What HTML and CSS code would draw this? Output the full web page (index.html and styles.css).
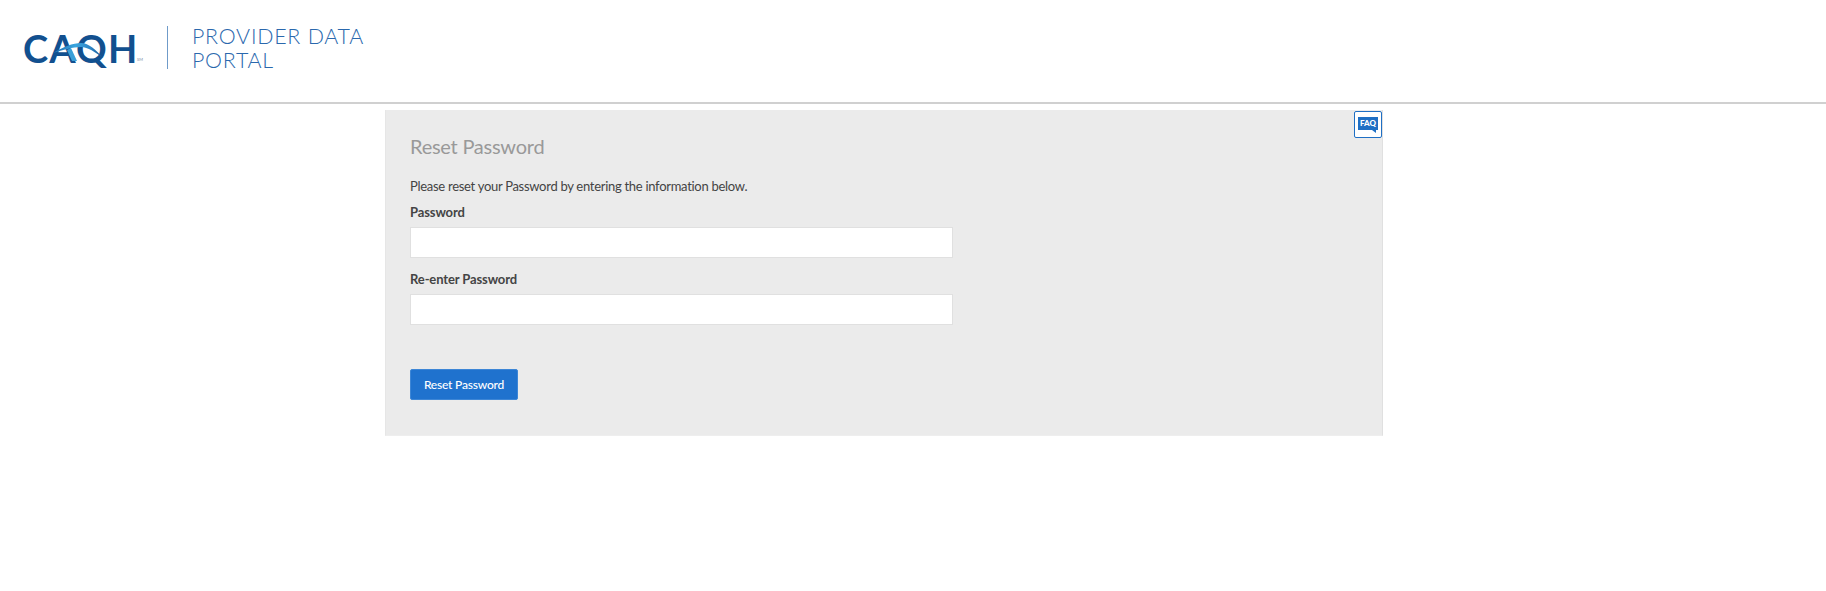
FILE: index.html
```html
<!DOCTYPE html>
<html lang="en">
<head>
  <meta charset="UTF-8">
  <title>Reset Password</title>
  <link rel="stylesheet" href="styles.css">
</head>
<body>
  <header class="site-header">
    <div class="logo">
      <span class="logo-word">CAQH</span>
      <svg class="logo-swoosh" width="144" height="49" viewBox="0 0 144 49">
        <defs>
          <linearGradient id="swoosh" x1="0" y1="0" x2="1" y2="0">
            <stop offset="0" stop-color="#1c6cb0"/>
            <stop offset="0.45" stop-color="#3aa5de"/>
            <stop offset="0.75" stop-color="#2f86c6"/>
            <stop offset="1" stop-color="#12508f"/>
          </linearGradient>
        </defs>
        <path d="M44 25L48 23L54 36H49Z" fill="#3a9fd8"/>
        <path d="M30 28C40 22 50 18 58 18C66 18 73 25 80 33C72 27 65 22 58 22C50 22 40 25 30 28Z" fill="url(#swoosh)"/>
      </svg>
      <span class="logo-mark">SM</span>
    </div>
    <div class="header-rule"></div>
    <div class="header-title">PROVIDER DATA<br>PORTAL</div>
  </header>

  <main class="panel">
    <a class="faq" href="#">
      <span class="faq-bubble">FAQ</span>
    </a>
    <h1>Reset Password</h1>
    <p class="intro">Please reset your Password by entering the information below.</p>
    <form>
      <label for="password">Password</label>
      <input type="password" id="password">
      <label for="password2">Re-enter Password</label>
      <input type="password" id="password2">
      <button type="button" class="reset-button">Reset Password</button>
    </form>
  </main>
</body>
</html>
```

FILE: styles.css
```css
body {
  margin: 0;
  font-family: Lato, 'Open Sans', sans-serif;
  background-color: #fff;
  color: #444;
}

.site-header {
  display: flex;
  align-items: flex-start;
  height: 102px;
  border-bottom: 2px solid #d0d0d0;
}

.logo {
  position: relative;
  width: 144px;
  height: 49px;
  margin: 25px 0 0 23px;
}

.logo-word {
  font-size: 38px;
  line-height: 46px;
  font-weight: 700;
  color: #12508f;
  letter-spacing: 1.2px;
}

.logo-swoosh {
  position: absolute;
  left: 0;
  top: 0;
}

.logo-mark {
  position: absolute;
  left: 114px;
  top: 32px;
  font-size: 4px;
  color: #7a8ea5;
}

.header-rule {
  width: 1px;
  height: 43px;
  margin-top: 26px;
  background-color: #6f9bc9;
}

.header-title {
  margin: 24px 0 0 24px;
  font-size: 21.4px;
  line-height: 24px;
  font-weight: 300;
  letter-spacing: 0.75px;
  color: #2a68ad;
}

.panel {
  position: relative;
  box-sizing: border-box;
  width: 998px;
  height: 326px;
  margin: 6px 0 0 385px;
  padding: 23px 24px 0;
  background-color: #ebebeb;
  border-left: 1px solid #e6e6e6;
  border-right: 1px solid #e0e0e0;
  border-bottom: 1px solid #eeeeee;
}

.faq {
  position: absolute;
  top: 1px;
  right: 0;
  box-sizing: border-box;
  width: 28px;
  height: 27px;
  padding: 5px 3px 0;
  background-color: #fff;
  border: 1px solid #1f6fc4;
  border-radius: 2px;
  text-decoration: none;
}

.faq-bubble {
  position: relative;
  display: block;
  height: 13px;
  background-color: #1f6fc4;
  color: #fff;
  font-size: 8px;
  line-height: 13px;
  font-weight: 900;
  text-align: center;
}

.faq-bubble::after {
  content: "";
  position: absolute;
  right: 2px;
  top: 13px;
  border-top: 3px solid #1f6fc4;
  border-left: 4px solid transparent;
}

h1 {
  margin: 0;
  font-size: 20px;
  line-height: 26px;
  font-weight: 400;
  letter-spacing: -0.25px;
  color: #999;
}

.intro {
  margin: 18px 0 0;
  font-size: 13px;
  line-height: 18px;
  letter-spacing: -0.29px;
  color: #444;
}

label {
  display: block;
  margin-top: 8px;
  font-size: 13px;
  line-height: 19px;
  font-weight: 700;
  letter-spacing: -0.12px;
  color: #444;
}

input {
  display: block;
  box-sizing: border-box;
  width: 543px;
  height: 31px;
  margin: 5px 0 12px;
  background-color: #fff;
  border: 1px solid #e0e0e0;
}

.reset-button {
  display: block;
  box-sizing: border-box;
  width: 108px;
  height: 31px;
  margin-top: 44px;
  padding: 0;
  font-family: inherit;
  font-size: 12px;
  font-weight: 500;
  letter-spacing: -0.2px;
  color: #fff;
  background-color: #1f72ce;
  border: 1px solid #3d86d6;
  border-radius: 2px;
}
```
